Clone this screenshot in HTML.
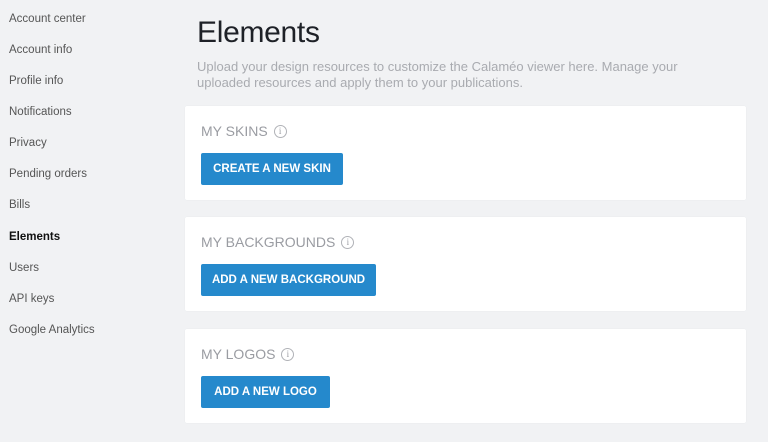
<!DOCTYPE html>
<html><head><meta charset="utf-8"><style>
*{margin:0;padding:0;box-sizing:border-box}
body{width:768px;height:442px;background:#f1f2f4;font-family:"Liberation Sans",sans-serif;position:relative;overflow:hidden}
.nav a{position:absolute;left:9px;font-size:11.5px;color:#555;text-decoration:none;white-space:nowrap}
.nav a.act{color:#111;font-weight:bold}
h1{position:absolute;left:197px;top:16px;font-size:30px;font-weight:normal;color:#1e2127;letter-spacing:-0.3px}
.sub{position:absolute;left:197px;top:59px;width:520px;font-size:13px;line-height:16px;color:#a9abb0}
.card{position:absolute;left:185px;width:561px;height:94px;background:#fff;border-radius:2px;box-shadow:0 0 1px rgba(0,0,0,.08)}
.card h2{position:absolute;left:16px;top:17px;font-size:14px;font-weight:normal;color:#9a9ca2;display:flex;align-items:center;gap:6px;white-space:nowrap}
.info{display:inline-block;width:13px;height:13px;border:1px solid #b0b2b7;border-radius:50%;font-size:9px;line-height:11px;text-align:center;color:#9a9ca2;font-family:"Liberation Serif",serif}
.btn{position:absolute;left:16px;top:47px;height:32px;background:#2589cc;color:#fff;font-weight:bold;font-size:11.5px;line-height:32px;text-align:center;border-radius:2px;white-space:nowrap}
</style></head><body>
<div class="nav">
<a style="top:13px">Account center</a>
<a style="top:44px">Account info</a>
<a style="top:75px">Profile info</a>
<a style="top:106px">Notifications</a>
<a style="top:137px">Privacy</a>
<a style="top:168px">Pending orders</a>
<a style="top:199px">Bills</a>
<a class="act" style="top:231px">Elements</a>
<a style="top:262px">Users</a>
<a style="top:293px">API keys</a>
<a style="top:324px">Google Analytics</a>
</div>
<h1>Elements</h1>
<div class="sub">Upload your design resources to customize the Calaméo viewer here. Manage your uploaded resources and apply them to your publications.</div>
<div class="card" style="top:106px"><h2>MY SKINS <span class="info">i</span></h2><div class="btn" style="width:142px">CREATE A NEW SKIN</div></div>
<div class="card" style="top:217px"><h2>MY BACKGROUNDS <span class="info">i</span></h2><div class="btn" style="width:175px">ADD A NEW BACKGROUND</div></div>
<div class="card" style="top:329px"><h2>MY LOGOS <span class="info">i</span></h2><div class="btn" style="width:129px">ADD A NEW LOGO</div></div>
</body></html>
